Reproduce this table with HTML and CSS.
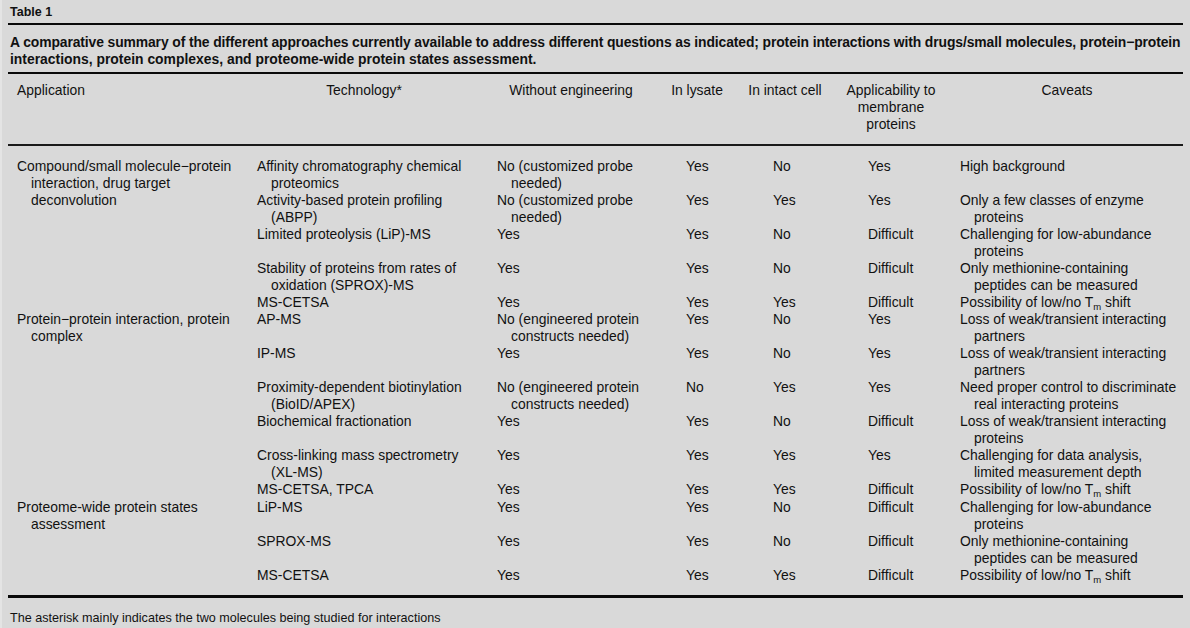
FILE: index.html
```html
<!DOCTYPE html>
<html>
<head>
<meta charset="utf-8">
<link rel="stylesheet" href="styles.css">
</head>
<body>
<div class="page">
  <div class="caption">Table 1</div>
  <div class="rule"></div>
  <div class="title"><span class="tight">A comparative summary of the different approaches currently available to address different questions as indicated; protein interactions with drugs/small molecules, protein−protein</span><br>interactions, protein complexes, and proteome-wide protein states assessment.</div>
  <div class="rule"></div>
  <div class="head">
    <div class="h-app">Application</div>
    <div>Technology*</div>
    <div>Without engineering</div>
    <div>In lysate</div>
    <div>In intact cell</div>
    <div>Applicability to<br>membrane<br>proteins</div>
    <div class="h-cav">Caveats</div>
  </div>
  <div class="rule rule-thin"></div>
  <div class="tbody">
    <div class="app g1">Compound/small molecule−protein<br>interaction, drug target<br>deconvolution</div>
    <div>Affinity chromatography chemical<br>proteomics</div><div>No (customized probe<br>needed)</div><div>Yes</div><div>No</div><div>Yes</div><div>High background</div>
    <div>Activity-based protein profiling<br>(ABPP)</div><div>No (customized probe<br>needed)</div><div>Yes</div><div>Yes</div><div>Yes</div><div>Only a few classes of enzyme<br>proteins</div>
    <div>Limited proteolysis (LiP)-MS</div><div>Yes</div><div>Yes</div><div>No</div><div>Difficult</div><div>Challenging for low-abundance<br>proteins</div>
    <div>Stability of proteins from rates of<br>oxidation (SPROX)-MS</div><div>Yes</div><div>Yes</div><div>No</div><div>Difficult</div><div>Only methionine-containing<br>peptides can be measured</div>
    <div>MS-CETSA</div><div>Yes</div><div>Yes</div><div>Yes</div><div>Difficult</div><div>Possibility of low/no T<span class="sub">m</span> shift</div>

    <div class="app g2">Protein−protein interaction, protein<br>complex</div>
    <div>AP-MS</div><div>No (engineered protein<br>constructs needed)</div><div>Yes</div><div>No</div><div>Yes</div><div>Loss of weak/transient interacting<br>partners</div>
    <div>IP-MS</div><div>Yes</div><div>Yes</div><div>No</div><div>Yes</div><div>Loss of weak/transient interacting<br>partners</div>
    <div>Proximity-dependent biotinylation<br>(BioID/APEX)</div><div>No (engineered protein<br>constructs needed)</div><div>No</div><div>Yes</div><div>Yes</div><div>Need proper control to discriminate<br>real interacting proteins</div>
    <div>Biochemical fractionation</div><div>Yes</div><div>Yes</div><div>No</div><div>Difficult</div><div>Loss of weak/transient interacting<br>proteins</div>
    <div>Cross-linking mass spectrometry<br>(XL-MS)</div><div>Yes</div><div>Yes</div><div>Yes</div><div>Yes</div><div>Challenging for data analysis,<br>limited measurement depth</div>
    <div class="tm">MS-CETSA, TPCA</div><div class="tm">Yes</div><div class="tm">Yes</div><div class="tm">Yes</div><div class="tm">Difficult</div><div class="tm">Possibility of low/no T<span class="sub">m</span> shift</div>

    <div class="app g3">Proteome-wide protein states<br>assessment</div>
    <div>LiP-MS</div><div>Yes</div><div>Yes</div><div>No</div><div>Difficult</div><div>Challenging for low-abundance<br>proteins</div>
    <div>SPROX-MS</div><div>Yes</div><div>Yes</div><div>No</div><div>Difficult</div><div>Only methionine-containing<br>peptides can be measured</div>
    <div>MS-CETSA</div><div>Yes</div><div>Yes</div><div>Yes</div><div>Difficult</div><div>Possibility of low/no T<span class="sub">m</span> shift</div>
  </div>
  <div class="rule rule-bottom"></div>
  <div class="foot">The asterisk mainly indicates the two molecules being studied for interactions</div>
</div>
</body>
</html>
```

FILE: styles.css
```css
* { box-sizing: border-box; }
html, body { margin: 0; padding: 0; }
body {
  background: #d9d9d9;
  font-family: "Liberation Sans", Arial, sans-serif;
  color: #111;
  width: 1190px;
  height: 628px;
  overflow: hidden;
  box-shadow: inset 2px 0 0 #e4e4e4;
}
.page { padding: 0 7px 0 8px; }
.caption {
  font-size: 12.5px;
  font-weight: bold;
  line-height: 16px;
  padding: 4px 0 0 2px;
  margin-bottom: 3px;
}
.rule { height: 2px; background: #0a0a0a; }
.rule-thin { height: 2px; background: #1a1a1a; }
.rule-bottom { height: 3px; }
.title {
  font-size: 13.9px;
  font-weight: bold;
  line-height: 17px;
  padding: 9px 0 4px 2px;
  white-space: nowrap;
}
.title .tight { letter-spacing: -0.11px; }
.head {
  display: grid;
  grid-template-columns: 242px 228px 186px 66px 110px 102px 1fr;
  padding: 8px 0 11px;
  font-size: 13.9px;
  line-height: 17px;
  text-align: center;
  white-space: nowrap;
}
.head .h-app { text-align: left; padding-left: 9px; }
.head .h-cav { padding-left: 9px; }
.tbody {
  display: grid;
  grid-template-columns: 240px 240px 189px 87px 95px 92px 1fr;
  padding: 11.5px 0 11.5px 9px;
  font-size: 13.9px;
  line-height: 17px;
}
.tbody > div {
  padding-left: 14px;
  text-indent: -14px;
  white-space: nowrap;
}
.tbody .app { grid-column: 1; }
.tbody .g1 { grid-row: span 5; }
.tbody .g2 { grid-row: span 6; }
.tbody .g3 { grid-row: span 3; }
.tbody .tm { padding-bottom: 1px; }
.sub {
  font-size: 9.5px;
  vertical-align: -3px;
  line-height: 0;
}
.foot {
  font-size: 12.6px;
  line-height: 15px;
  padding: 13px 0 0 2px;
}
```
